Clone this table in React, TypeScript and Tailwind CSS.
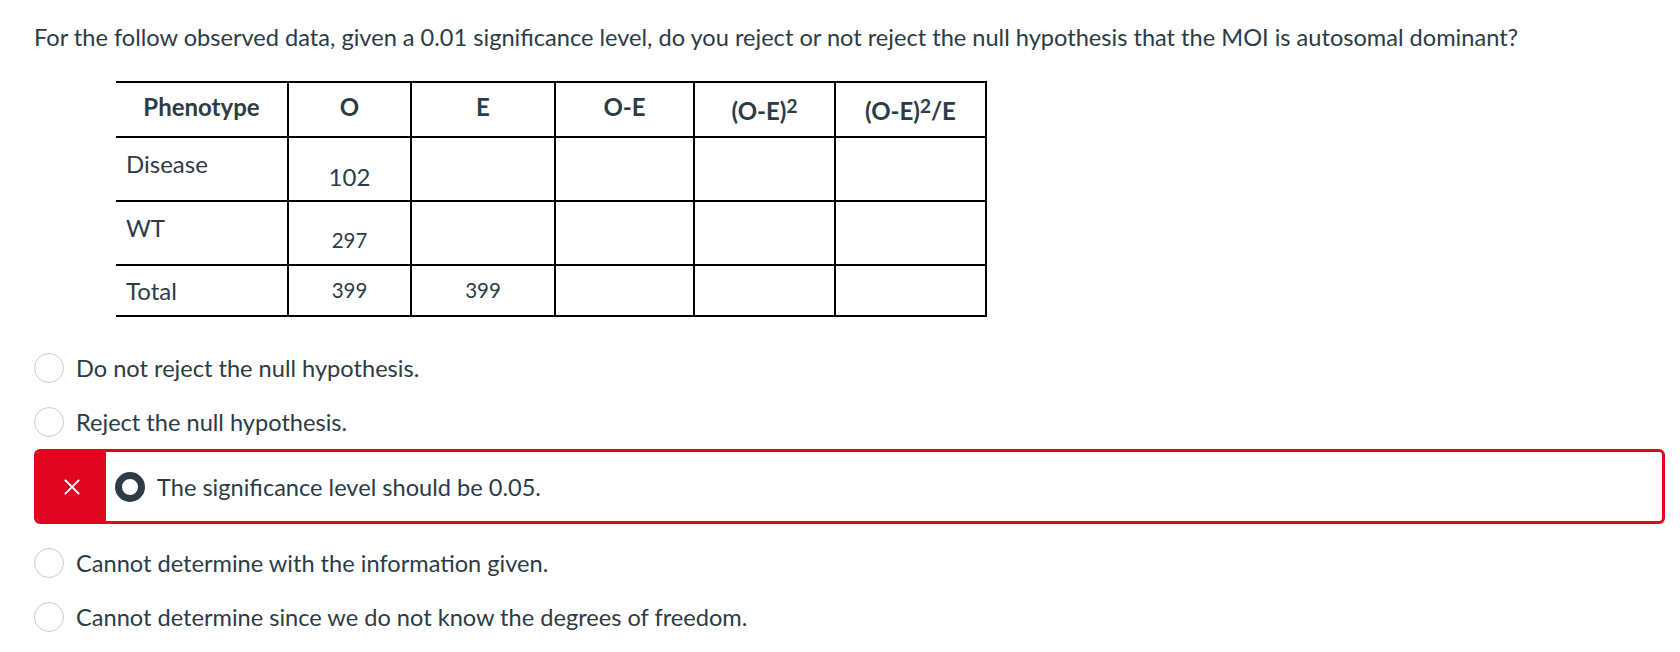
import React from "react";

const cellBase = "border-b-2 border-black";
const cellL = "border-b-2 border-l-2 border-black";

function Sup2() {
  return <span className="relative top-[-7px] text-[19px] leading-none">2</span>;
}

function Radio() {
  return <span className="block w-[30px] h-[30px] rounded-full border border-[#c7cdd1] bg-white shrink-0" />;
}

function Option({ text, className = "" }: { text: string; className?: string }) {
  return (
    <div className={`flex items-center h-[30px] ${className}`}>
      <Radio />
      <span className="ml-[12px] text-[23.6px] leading-[28px] text-[#2d3b45] whitespace-nowrap">{text}</span>
    </div>
  );
}

export default function App() {
  return (
    <div
      className="bg-white min-h-[652px] pl-[34px] pr-[15px] pt-[23px] text-[#2d3b45]"
      style={{ fontFamily: "Lato, 'Noto Sans', sans-serif" }}
    >
      <p className="text-[23.6px] leading-[28px]">
        For the follow observed data, given a 0.01 significance level, do you reject or not reject the null hypothesis that the MOI is autosomal dominant?
      </p>

      <div className="mt-[30px] ml-[82px] w-fit border-t-2 border-r-2 border-black grid grid-cols-[171px_123px_144px_139px_141px_151px] grid-rows-[55px_64px_64px_51px]">
        {/* header */}
        <div className={`${cellBase} pt-[10px] text-center font-bold text-[24px] leading-[28px]`}>Phenotype</div>
        <div className={`${cellL} pt-[10px] text-center font-bold text-[24px] leading-[28px]`}>O</div>
        <div className={`${cellL} pt-[10px] text-center font-bold text-[24px] leading-[28px]`}>E</div>
        <div className={`${cellL} pt-[10px] text-center font-bold text-[24px] leading-[28px]`}>O-E</div>
        <div className={`${cellL} pt-[14px] text-center font-bold text-[24px] leading-[28px] whitespace-nowrap`}>
          (O-E)<Sup2 />
        </div>
        <div className={`${cellL} pt-[14px] text-center font-bold text-[24px] leading-[28px] whitespace-nowrap`}>
          (O-E)<Sup2 />/E
        </div>

        {/* row 1 */}
        <div className={`${cellBase} pt-[12px] pl-[10px] text-[24px] leading-[28px]`}>Disease</div>
        <div className={`${cellL} pt-[25px] text-center text-[24px] leading-[28px]`}>102</div>
        <div className={cellL} />
        <div className={cellL} />
        <div className={cellL} />
        <div className={cellL} />

        {/* row 2 */}
        <div className={`${cellBase} pt-[12px] pl-[10px] text-[24px] leading-[28px]`}>WT</div>
        <div className={`${cellL} pt-[26px] text-center text-[20.5px] leading-[24px]`}>297</div>
        <div className={cellL} />
        <div className={cellL} />
        <div className={cellL} />
        <div className={cellL} />

        {/* row 3 */}
        <div className={`${cellBase} pt-[11px] pl-[10px] text-[24px] leading-[28px]`}>Total</div>
        <div className={`${cellL} pt-[12px] text-center text-[20.5px] leading-[24px]`}>399</div>
        <div className={`${cellL} pt-[12px] text-center text-[20.5px] leading-[24px]`}>399</div>
        <div className={cellL} />
        <div className={cellL} />
        <div className={cellL} />
      </div>

      <div className="mt-[36px]">
        <Option text="Do not reject the null hypothesis." />
        <Option text="Reject the null hypothesis." className="mt-[24px]" />

        <div className="mt-[12px] h-[75px] flex items-stretch border-[3px] border-[#e0061f] rounded-[6px] overflow-hidden">
          <div className="w-[69px] bg-[#e0061f] flex items-center justify-center">
            <svg width="16" height="16" viewBox="0 0 16 16" fill="none">
              <path d="M1.5 1.5L14.5 14.5M14.5 1.5L1.5 14.5" stroke="white" strokeWidth="1.8" strokeLinecap="square" />
            </svg>
          </div>
          <div className="flex items-center ml-[9px]">
            <span className="block w-[30px] h-[30px] rounded-full border-[7px] border-[#2d3b45] bg-white shrink-0" />
            <span className="ml-[12px] text-[23.6px] leading-[28px] whitespace-nowrap">The significance level should be 0.05.</span>
          </div>
        </div>

        <Option text="Cannot determine with the information given." className="mt-[24px]" />
        <Option text="Cannot determine since we do not know the degrees of freedom." className="mt-[24px]" />
      </div>
    </div>
  );
}
